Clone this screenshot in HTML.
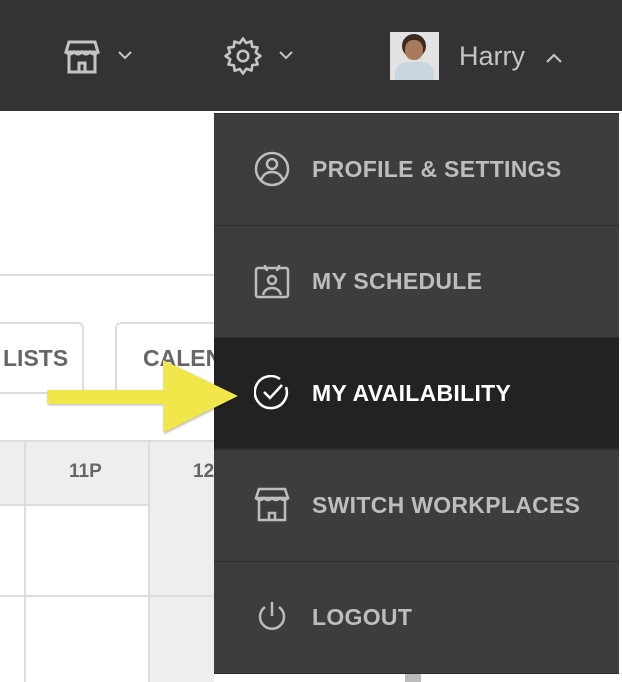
<!DOCTYPE html>
<html><head><style>
body{margin:0;width:622px;height:682px;overflow:hidden;background:#fff;font-family:"Liberation Sans",sans-serif;position:relative}
.hdr{position:absolute;left:0;top:0;width:622px;height:111px;background:#333}
.abs{position:absolute}
.dd{position:absolute;left:214px;top:113px;width:405px;height:561px;background:#2c2c2c}
.it{position:absolute;left:0;width:405px;height:111px;background:#3d3d3d;color:#bdbdbd;font-weight:bold;font-size:23px;letter-spacing:0.3px}
.it span{position:absolute;left:98px;top:42px}
.it svg{position:absolute;left:40px;top:37px}
</style></head><body>
<div class="hdr"></div>
<svg class="abs" style="left:63px;top:36px" width="40" height="40" viewBox="0 0 40 40" fill="none" stroke="#c4c4c4" stroke-width="3"><path d="M6 6h26l3 10H3z"/><path d="M3 16q4 4 8 0q4 4 8 0q4 4 8 0q4 4 8 0"/><path d="M6 18v18h26V18"/><path d="M16 36v-9h6v9"/></svg>
<svg class="abs" style="left:117px;top:50px" width="16" height="10" fill="none" stroke="#c4c4c4" stroke-width="2"><path d="M2 2l6 6l6-6"/></svg>
<svg class="abs" style="left:222px;top:35px" width="42" height="42" viewBox="0 0 24 24" fill="none" stroke="#c4c4c4" stroke-width="1.5"><circle cx="12" cy="12" r="3"/><path d="M12 2l1.8 2.6 3-1 .4 3.1 3.1.4-1 3L22 12l-2.6 1.8 1 3-3.1.4-.4 3.1-3-1L12 22l-1.8-2.6-3 1-.4-3.1-3.1-.4 1-3L2 12l2.6-1.8-1-3 3.1-.4.4-3.1 3 1z" stroke-linejoin="round"/></svg>
<svg class="abs" style="left:278px;top:50px" width="16" height="10" fill="none" stroke="#c4c4c4" stroke-width="2"><path d="M2 2l6 6l6-6"/></svg>
<div class="abs" style="left:390px;top:32px;width:49px;height:48px;background:#e2e2e2">
<div class="abs" style="left:12px;top:2px;width:24px;height:24px;border-radius:50%;background:#3a2a20"></div>
<div class="abs" style="left:15px;top:8px;width:18px;height:20px;border-radius:45%;background:#a97a5c"></div>
<div class="abs" style="left:5px;top:30px;width:39px;height:18px;border-radius:12px 12px 0 0;background:#c9d6e0"></div>
</div>
<div class="abs" style="left:459px;top:41px;color:#c4c4c4;font-size:27px">Harry</div>
<svg class="abs" style="left:545px;top:53px" width="18" height="11" fill="none" stroke="#c4c4c4" stroke-width="2.2"><path d="M2 9l7-7l7 7"/></svg>

<div class="abs" style="left:0;top:274px;width:214px;height:2px;background:#ddd"></div>
<div class="abs" style="left:-10px;top:322px;width:90px;height:68px;border:2px solid #ddd;border-radius:6px"></div>
<div class="abs" style="top:345px;color:#666;font-size:23px;font-weight:bold;left:3px">LISTS</div>
<div class="abs" style="left:115px;top:322px;width:120px;height:68px;border:2px solid #ddd;border-radius:6px"></div>
<div class="abs" style="left:143px;top:345px;color:#666;font-size:23px;font-weight:bold">CALEN</div>
<div class="abs" style="left:0;top:440px;width:214px;height:62px;background:#eee;border-top:2px solid #ddd;border-bottom:2px solid #ddd"></div>
<div class="abs" style="left:24px;top:442px;width:2px;height:240px;background:#ddd"></div>
<div class="abs" style="left:148px;top:442px;width:2px;height:240px;background:#ddd"></div>
<div class="abs" style="left:150px;top:504px;width:64px;height:178px;background:#eee"></div>
<div class="abs" style="left:0;top:595px;width:214px;height:2px;background:#ddd"></div>
<div class="abs" style="left:69px;top:461px;color:#666;font-size:19px;font-weight:bold">11P</div>
<div class="abs" style="left:193px;top:461px;color:#666;font-size:19px;font-weight:bold">12</div>
<div class="abs" style="left:405px;top:674px;width:16px;height:8px;background:#bbb"></div>

<div class="dd">
<div class="it" style="top:1px"><svg width="36" height="36" viewBox="0 0 36 36" fill="none" stroke="#bdbdbd" stroke-width="2.5"><circle cx="18" cy="18" r="16"/><circle cx="18" cy="13" r="5"/><path d="M7 29q3-8 11-8t11 8"/></svg><span>PROFILE &amp; SETTINGS</span></div>
<div class="it" style="top:113px"><svg width="36" height="36" viewBox="0 0 36 36" fill="none" stroke="#bdbdbd" stroke-width="2.5"><rect x="2" y="5" width="32" height="29" rx="2"/><path d="M11 2q0 5 3 5M25 2q0 5-3 5"/><circle cx="18" cy="17" r="4"/><path d="M9 32q2-7 9-7t9 7"/></svg><span>MY SCHEDULE</span></div>
<div class="it" style="top:225px;height:110px;background:#222;color:#fff"><svg width="36" height="36" viewBox="0 0 36 36" fill="none" stroke="#fff" stroke-width="2.5"><path d="M32 12A16 16 0 1 1 26 4"/><path d="M10 17l6 6l12-13"/></svg><span>MY AVAILABILITY</span></div>
<div class="it" style="top:337px"><svg width="36" height="36" viewBox="0 0 36 36" fill="none" stroke="#bdbdbd" stroke-width="2.5"><path d="M5 2h26l3 9H2z"/><path d="M2 11q4 4 8 0q4 4 8 0q4 4 8 0q4 4 8 0"/><path d="M5 13v20h26V13"/><path d="M15 33v-7h6v7"/></svg><span>SWITCH WORKPLACES</span></div>
<div class="it" style="top:449px;height:111px"><svg width="36" height="36" viewBox="0 0 36 36" fill="none" stroke="#bdbdbd" stroke-width="2.5"><path d="M11 8A12 12 0 1 0 25 8"/><path d="M18 3v14"/></svg><span>LOGOUT</span></div>
</div>
<svg class="abs" style="left:40px;top:355px;z-index:5" width="205" height="85"><path d="M7 35H123V5L198 41L123 78V49H7z" fill="#f2e74a" filter="drop-shadow(1px 1px 1px rgba(0,0,0,.3))"/></svg>
</body></html>
